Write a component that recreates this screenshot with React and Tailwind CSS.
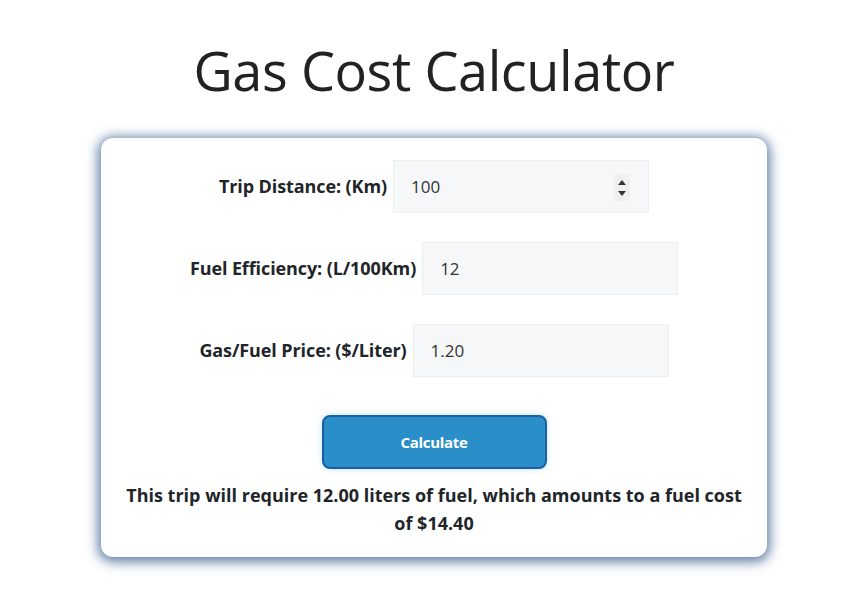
import React, { useState } from 'react';

const font = { fontFamily: '"Open Sans", "Noto Sans", Arial, sans-serif' };

const Field = ({ label, value, onChange, spinner }) => (
  <div className="flex items-center justify-center gap-[6px]">
    <label className="text-[18px] font-bold text-[#212529] tracking-[-0.1px]">{label}</label>
    <div className="relative w-[256px] h-[53px] bg-[#f6f7f9] border border-[#eceef0]">
      <input
        type="text"
        value={value}
        onChange={(e) => onChange(e.target.value)}
        className="w-full h-full bg-transparent pl-[17px] pr-[40px] text-[17px] text-[#333] outline-none"
        style={font}
      />
      {spinner && (
        <div className="absolute right-[18px] top-[13px] w-[16px] h-[27px] bg-[#eef0f2] flex flex-col items-center justify-center gap-[6px]">
          <svg width="8" height="5" viewBox="0 0 8 5"><path d="M4 0 L8 5 L0 5 Z" fill="#333" /></svg>
          <svg width="8" height="5" viewBox="0 0 8 5"><path d="M0 0 L8 0 L4 5 Z" fill="#333" /></svg>
        </div>
      )}
    </div>
  </div>
);

export default function App() {
  const [distance, setDistance] = useState('100');
  const [efficiency, setEfficiency] = useState('12');
  const [price, setPrice] = useState('1.20');

  const liters = (parseFloat(distance) * parseFloat(efficiency)) / 100;
  const cost = liters * parseFloat(price);

  return (
    <div className="min-h-screen bg-white flex flex-col items-center text-[#212529]" style={font}>
      <h1 className="mt-[30px] text-[54px] leading-[80px] font-normal tracking-[-0.4px] text-[#222]">Gas Cost Calculator</h1>
      <div className="mt-[28px] w-[666px] h-[419px] bg-white rounded-[12px] shadow-[0_2px_12px_3px_rgba(60,95,145,0.8)] flex flex-col items-center pt-[22px]">
        <div className="flex flex-col gap-[29px]">
          <Field label="Trip Distance: (Km)" value={distance} onChange={setDistance} spinner />
          <Field label="Fuel Efficiency: (L/100Km)" value={efficiency} onChange={setEfficiency} />
          <Field label="Gas/Fuel Price: ($/Liter)" value={price} onChange={setPrice} />
        </div>
        <button className="mt-[38px] w-[225px] h-[54px] rounded-[8px] bg-[#2a8ec8] border-2 border-[#1b5fa6] text-white text-[15px] font-bold shadow-[0_0_6px_rgba(140,200,240,0.5)] tracking-[-0.3px]">
          Calculate
        </button>
        <p className="mt-[12px] text-center text-[18px] leading-[28px] font-bold text-[#212529]">
          This trip will require {liters.toFixed(2)} liters of fuel, which amounts to a fuel cost
          <br />
          of ${cost.toFixed(2)}
        </p>
      </div>
    </div>
  );
}
